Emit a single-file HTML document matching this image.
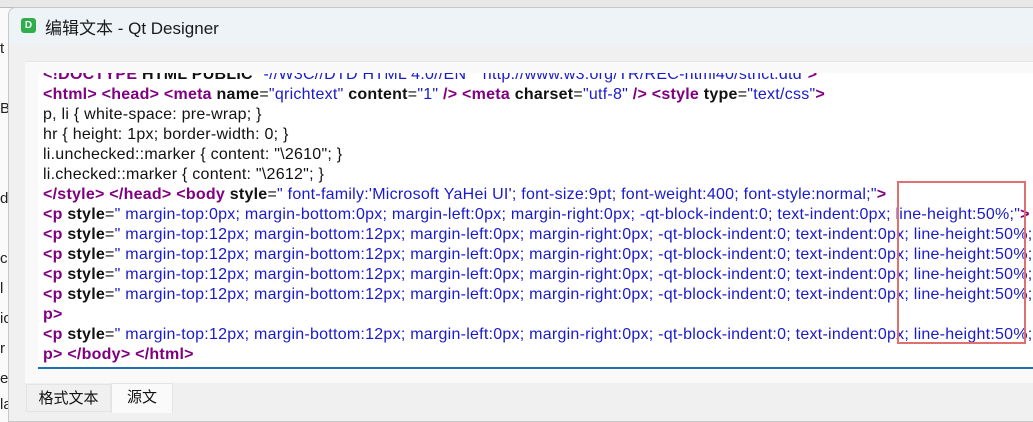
<!DOCTYPE html>
<html style="overflow:hidden"><head><meta charset="utf-8"><style>
*{margin:0;padding:0;box-sizing:border-box}
body{width:1033px;height:422px;overflow:hidden;background:#f3f3f3;position:relative;font-family:"Liberation Sans","Noto Sans CJK SC",sans-serif}
.topbar{position:absolute;left:0;top:0;width:1033px;height:8px;background:#e8e8e8;border-bottom:1px solid #bbb}
.leftbg{position:absolute;left:0;top:8px;width:9px;height:414px;background:#fafafa;font-size:15px;color:#222}
.leftbg span{position:absolute;left:0}
.win{position:absolute;left:8px;top:7px;width:1030px;height:415px;background:#f0f0f0;border:1px solid #c8c8c8;border-radius:8px 0 0 0;overflow:hidden}
.title{height:37px;background:#eef3f8;position:relative}
.logo{position:absolute;left:12px;top:10px;width:15px;height:15px;background:#2fae4c;border-radius:3px;color:#fff;font-size:10px;font-weight:bold;text-align:center;line-height:15px}
.ttext{position:absolute;left:36px;top:6px;font-size:17px;color:#1a1a1a}
.panel{position:absolute;left:16px;top:53px;width:1030px;height:322px;background:#f9f9f9;border-top:1px solid #e6e6e6}
.ed{position:absolute;left:29px;top:65px;width:1010px;height:296px;background:#fff;border-bottom:2px solid #2070b0;overflow:hidden}
.code{position:absolute;left:5px;top:-8px;font-size:16px;letter-spacing:0.25px;line-height:20px;white-space:pre;color:#111}
.t{color:#800080;font-weight:bold}
.a{color:#111;font-weight:bold}
.v{color:#1a1acc}
.tab{position:absolute;top:0;height:28px;font-size:15px;line-height:28px;color:#111}
.box{position:absolute;left:897px;top:181px;width:129px;height:163px;border:2px solid #e07070}
</style></head><body>
<div class="topbar"></div>
<div class="leftbg"><span style="top:32px">t</span><span style="top:92px">B</span><span style="top:182px">di</span><span style="top:242px">cr</span><span style="top:272px">l</span><span style="top:302px">ic</span><span style="top:332px">r</span><span style="top:362px">e</span><span style="top:388px">la</span></div>
<div class="win">
<div class="title"><div class="logo">D</div><div class="ttext">编辑文本 - Qt Designer</div></div>
<div class="panel"></div>
<div class="ed"><div class="code"><span class="t">&lt;!DOCTYPE</span> <span class="a">HTML PUBLIC</span> <span class="v">"-//W3C//DTD HTML 4.0//EN" "http://www.w3.org/TR/REC-html40/strict.dtd"</span><span class="t">&gt;</span>
<span class="t">&lt;html&gt; &lt;head&gt; &lt;meta</span> <span class="a">name</span>=<span class="v">"qrichtext"</span> <span class="a">content</span>=<span class="v">"1"</span> <span class="t">/&gt; &lt;meta</span> <span class="a">charset</span>=<span class="v">"utf-8"</span> <span class="t">/&gt; &lt;style</span> <span class="a">type</span>=<span class="v">"text/css"</span><span class="t">&gt;</span>
p, li { white-space: pre-wrap; }
hr { height: 1px; border-width: 0; }
li.unchecked::marker { content: "\2610"; }
li.checked::marker { content: "\2612"; }
<span class="t">&lt;/style&gt; &lt;/head&gt; &lt;body</span> <span class="a">style</span>=<span class="v">" font-family:'Microsoft YaHei UI'; font-size:9pt; font-weight:400; font-style:normal;"</span><span class="t">&gt;</span>
<span class="t">&lt;p</span> <span class="a">style</span>=<span class="v">" margin-top:0px; margin-bottom:0px; margin-left:0px; margin-right:0px; -qt-block-indent:0; text-indent:0px; line-height:50%;"</span><span class="t">&gt; &lt;</span>
<span class="t">&lt;p</span> <span class="a">style</span>=<span class="v">" margin-top:12px; margin-bottom:12px; margin-left:0px; margin-right:0px; -qt-block-indent:0; text-indent:0px; line-height:50%;"</span>
<span class="t">&lt;p</span> <span class="a">style</span>=<span class="v">" margin-top:12px; margin-bottom:12px; margin-left:0px; margin-right:0px; -qt-block-indent:0; text-indent:0px; line-height:50%;"</span>
<span class="t">&lt;p</span> <span class="a">style</span>=<span class="v">" margin-top:12px; margin-bottom:12px; margin-left:0px; margin-right:0px; -qt-block-indent:0; text-indent:0px; line-height:50%;"</span>
<span class="t">&lt;p</span> <span class="a">style</span>=<span class="v">" margin-top:12px; margin-bottom:12px; margin-left:0px; margin-right:0px; -qt-block-indent:0; text-indent:0px; line-height:50%;"</span>
<span class="t">p&gt;</span>
<span class="t">&lt;p</span> <span class="a">style</span>=<span class="v">" margin-top:12px; margin-bottom:12px; margin-left:0px; margin-right:0px; -qt-block-indent:0; text-indent:0px; line-height:50%;"</span>
<span class="t">p&gt; &lt;/body&gt; &lt;/html&gt;</span></div></div>
</div>
<div class="tab" style="left:26px;top:384px;width:85px;background:#f0f0f0;text-align:center;border:1px solid #e4e4e4">格式文本</div>
<div class="tab" style="left:111px;top:383px;width:62px;height:30px;background:#fafafa;text-align:center;border:1px solid #e4e4e4;border-bottom:none">源文</div>
<div class="box"></div>
</body></html>
